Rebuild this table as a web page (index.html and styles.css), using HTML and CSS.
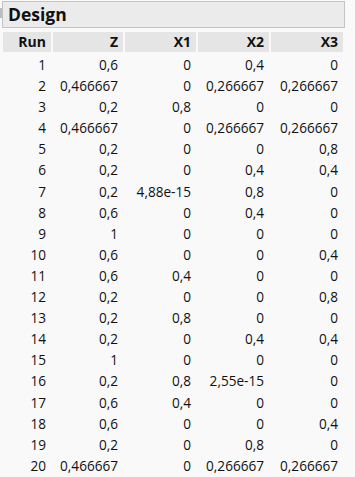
FILE: index.html
```html
<!DOCTYPE html>
<html>
<head>
<meta charset="utf-8">
<link rel="stylesheet" href="styles.css">
</head>
<body>
<div class="panel">
  <div class="titlebar">
    <span class="stub"></span>
    <div class="titlebox">Design</div>
  </div>
  <div class="grid head">
    <div class="hc">Run</div><div class="hc">Z</div><div class="hc">X1</div><div class="hc">X2</div><div class="hc">X3</div>
  </div>
  <div class="rows">
    <div class="grid row"><div>1</div><div>0,6</div><div>0</div><div>0,4</div><div>0</div></div>
    <div class="grid row"><div>2</div><div>0,466667</div><div>0</div><div>0,266667</div><div>0,266667</div></div>
    <div class="grid row"><div>3</div><div>0,2</div><div>0,8</div><div>0</div><div>0</div></div>
    <div class="grid row"><div>4</div><div>0,466667</div><div>0</div><div>0,266667</div><div>0,266667</div></div>
    <div class="grid row"><div>5</div><div>0,2</div><div>0</div><div>0</div><div>0,8</div></div>
    <div class="grid row"><div>6</div><div>0,2</div><div>0</div><div>0,4</div><div>0,4</div></div>
    <div class="grid row"><div>7</div><div>0,2</div><div>4,88e-15</div><div>0,8</div><div>0</div></div>
    <div class="grid row"><div>8</div><div>0,6</div><div>0</div><div>0,4</div><div>0</div></div>
    <div class="grid row"><div>9</div><div>1</div><div>0</div><div>0</div><div>0</div></div>
    <div class="grid row"><div>10</div><div>0,6</div><div>0</div><div>0</div><div>0,4</div></div>
    <div class="grid row"><div>11</div><div>0,6</div><div>0,4</div><div>0</div><div>0</div></div>
    <div class="grid row"><div>12</div><div>0,2</div><div>0</div><div>0</div><div>0,8</div></div>
    <div class="grid row"><div>13</div><div>0,2</div><div>0,8</div><div>0</div><div>0</div></div>
    <div class="grid row"><div>14</div><div>0,2</div><div>0</div><div>0,4</div><div>0,4</div></div>
    <div class="grid row"><div>15</div><div>1</div><div>0</div><div>0</div><div>0</div></div>
    <div class="grid row"><div>16</div><div>0,2</div><div>0,8</div><div>2,55e-15</div><div>0</div></div>
    <div class="grid row"><div>17</div><div>0,6</div><div>0,4</div><div>0</div><div>0</div></div>
    <div class="grid row"><div>18</div><div>0,6</div><div>0</div><div>0</div><div>0,4</div></div>
    <div class="grid row"><div>19</div><div>0,2</div><div>0</div><div>0,8</div><div>0</div></div>
    <div class="grid row"><div>20</div><div>0,466667</div><div>0</div><div>0,266667</div><div>0,266667</div></div>
  </div>
</div>
</body>
</html>
```
FILE: styles.css
```css
html, body {
  margin: 0;
  padding: 0;
  background: #f9f9f9;
}
body {
  font-family: "Open Sans", "Noto Sans", sans-serif;
  font-size: 13.6px;
  color: #111;
  width: 355px;
  height: 477px;
  overflow: hidden;
}
.panel {
  padding-top: 1px;
}
.titlebar {
  display: flex;
  align-items: flex-start;
}
.stub {
  width: 2px;
  height: 10px;
  margin-top: 7px;
  background: #bdbdbd;
}
.titlebox {
  width: 336px;
  height: 25px;
  border: 1px solid #c4c4c4;
  background: #ebebeb;
  font-weight: bold;
  font-size: 17.5px;
  line-height: 25px;
  padding-left: 5px;
  box-sizing: content-box;
}
.grid {
  display: grid;
  grid-template-columns: 48px 70px 71px 71px 72px;
  column-gap: 2px;
  margin-left: 3px;
}
.head {
  margin-top: 4px;
}
.hc {
  background: #e5e5e5;
  font-weight: bold;
  font-size: 14px;
  text-align: right;
  padding-right: 5px;
  height: 20px;
  line-height: 20px;
}
.rows {
  padding-top: 3px;
}
.row {
  height: 21.1px;
  line-height: 20px;
}
.row > div {
  text-align: right;
  padding-right: 5px;
  white-space: nowrap;
}
```
